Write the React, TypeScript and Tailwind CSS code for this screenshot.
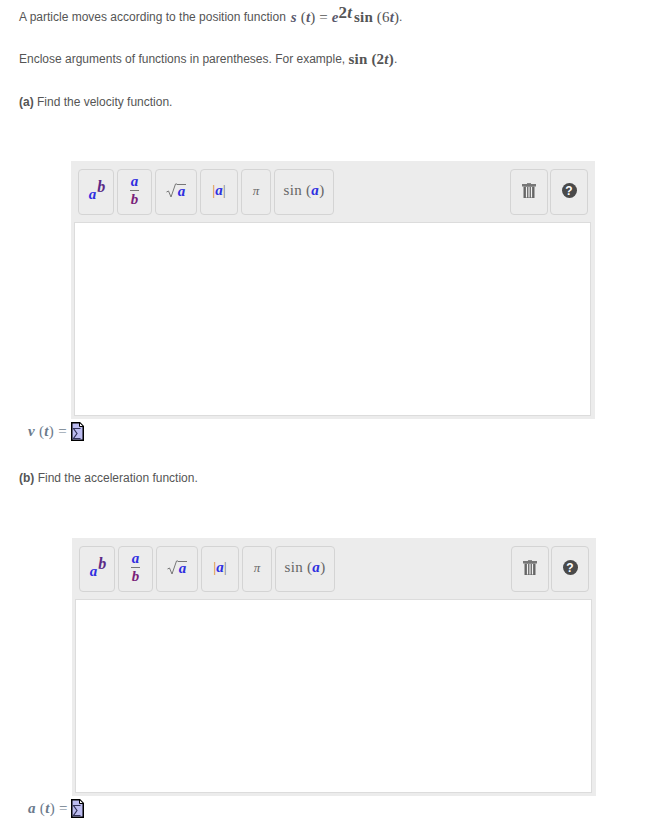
import React from "react";

const serif = "font-['Liberation_Serif',serif]";

function V({ children, c = "text-[#5a5a6e]" }: { children: React.ReactNode; c?: string }) {
  return <i className={`${serif} ${c} font-bold`}>{children}</i>;
}

function Btn({ w, children }: { w: string; children?: React.ReactNode }) {
  return (
    <div className={`${w} h-[46px] pb-[3px] flex items-center justify-center rounded-[4px] border border-[#d4d4d4] bg-[#ececec] ${serif} text-[#666]`}>
      {children}
    </div>
  );
}

function Trash() {
  return (
    <svg width="14" height="15" viewBox="0 0 14 15">
      <rect x="5" y="0" width="4" height="1.5" fill="#888" />
      <rect x="0" y="1" width="14" height="2.5" fill="#777" />
      <path d="M1.5 3.5h11V15h-11z" fill="#666" />
      <path d="M4.5 4v10.5M7 4v10.5M9.5 4v10.5" stroke="#f2f2f2" strokeWidth="1.2" />
    </svg>
  );
}

function Help() {
  return (
    <div className="w-[15px] h-[15px] rounded-full bg-[#4a4a4a] flex items-center justify-center text-white text-[12px] font-bold font-['Liberation_Sans',sans-serif]">
      ?
    </div>
  );
}

function Editor({ ml }: { ml: string }) {
  return (
    <div className={`${ml} w-[524px] h-[258px] bg-[#ececec] pl-[3px] pr-[4px] pb-[3px] flex flex-col`}>
      <div className="h-[61px] shrink-0 pt-[8px] pl-[4px] pr-[3px] flex justify-between">
        <div className="flex gap-[3px]">
          <Btn w="w-[36px]">
            <span className="flex items-start font-bold italic leading-none pl-[2px]">
              <span className="text-[#2f2fe0] text-[15px] mt-[8px] mr-[1px]">a</span>
              <span className="text-[#5b2a86] text-[16px]">b</span>
            </span>
          </Btn>
          <Btn w="w-[35px]">
            <div className="flex flex-col items-center text-[15px] leading-[13px] font-bold italic">
              <span className="text-[#2f2fe0]">a</span>
              <span className="w-[9px] h-px bg-[#777] my-[2px]" />
              <span className="text-[#7a1f7a]">b</span>
            </div>
          </Btn>
          <Btn w="w-[42px]">
            <span className="flex items-center">
              <svg width="11" height="15" viewBox="0 0 11 15"><path d="M.5 9l2-1 2.5 6L9.5 1H11" fill="none" stroke="#777" strokeWidth="1" /></svg>
              <span className="border-t border-[#777] text-[#2f2fe0] text-[15px] leading-[13px] font-bold italic px-[1px]">a</span>
            </span>
          </Btn>
          <Btn w="w-[38px]">
            <span className="text-[15px] font-bold italic"><span className="text-[#d9822b] not-italic font-normal">|</span><span className="text-[#2f2fe0]">a</span><span className="text-[#777] not-italic font-normal">|</span></span>
          </Btn>
          <Btn w="w-[30px]"><i className="text-[13px]">π</i></Btn>
          <Btn w="w-[60px]">
            <span className="text-[15px] tracking-[0.3px]">sin (<b className="italic text-[#2f2fe0]">a</b>)</span>
          </Btn>
        </div>
        <div className="flex gap-[2px]">
          <Btn w="w-[38px]"><Trash /></Btn>
          <Btn w="w-[38px]"><Help /></Btn>
        </div>
      </div>
      <div className="flex-1 bg-white border border-[#dcdcdc]" />
    </div>
  );
}

function Sigma() {
  return (
    <svg width="13" height="19" viewBox="0 0 13 19" className="block">
      <path d="M.75.75h8l3.5 3.5v14H.75z" fill="#bcbcf0" stroke="#000" strokeWidth="1.5" />
      <path d="M8.5 1v3.5H12" fill="#fff" stroke="#000" strokeWidth="1" />
      <path d="M9.5 6.5h-7l3.5 5-3.5 5h7" fill="none" stroke="#33335a" strokeWidth="1.2" />
    </svg>
  );
}

function Answer({ name, pl }: { name: string; pl: string }) {
  return (
    <div className={`h-[19px] mt-[3px] flex items-center ${pl} ${serif} text-[15px] tracking-[0.3px] text-[#6b7a8c]`}>
      <span className="w-[43px] whitespace-pre">
        <i className="font-bold">{name}</i> (<i className="font-bold">t</i>) =
      </span>
      <Sigma />
    </div>
  );
}

export default function App() {
  return (
    <div className="w-[672px] h-[840px] bg-white text-[12px] text-[#555] font-['Liberation_Sans',Arial,sans-serif] overflow-hidden">
      <div className="h-[20px] mt-[7px] pl-[19px] flex items-end leading-[20px]">
        <span className="mr-[5px]">A particle moves according to the position function</span>
        <span className={`${serif} text-[15px] tracking-[0.15px] whitespace-pre`}>
          <V>s</V> (<V>t</V>) = <V>e</V><span className="text-[17px] font-bold relative top-[-4px] mr-[2px]">2<i>t</i></span><b className="font-semibold">sin</b> (6<V>t</V>)
        </span>
        <span>.</span>
      </div>
      <div className="h-[20px] mt-[22px] pl-[19px] flex items-center">
        <span>Enclose arguments of functions in parentheses. For example,&nbsp;</span>
        <span className={`${serif} text-[15px] tracking-[0.2px] whitespace-pre font-bold`}>sin (2<i>t</i>)</span>
        <span>.</span>
      </div>
      <div className="h-[20px] mt-[23px] pl-[19px] flex items-center">
        <span><b>(a)</b> Find the velocity function.</span>
      </div>
      <div className="mt-[49px]">
        <Editor ml="ml-[71px]" />
      </div>
      <Answer name="v" pl="pl-[28px]" />
      <div className="h-[20px] mt-[27px] pl-[19px] flex items-center">
        <span><b>(b)</b> Find the acceleration function.</span>
      </div>
      <div className="mt-[50px]">
        <Editor ml="ml-[72px]" />
      </div>
      <Answer name="a" pl="pl-[28px]" />
    </div>
  );
}
